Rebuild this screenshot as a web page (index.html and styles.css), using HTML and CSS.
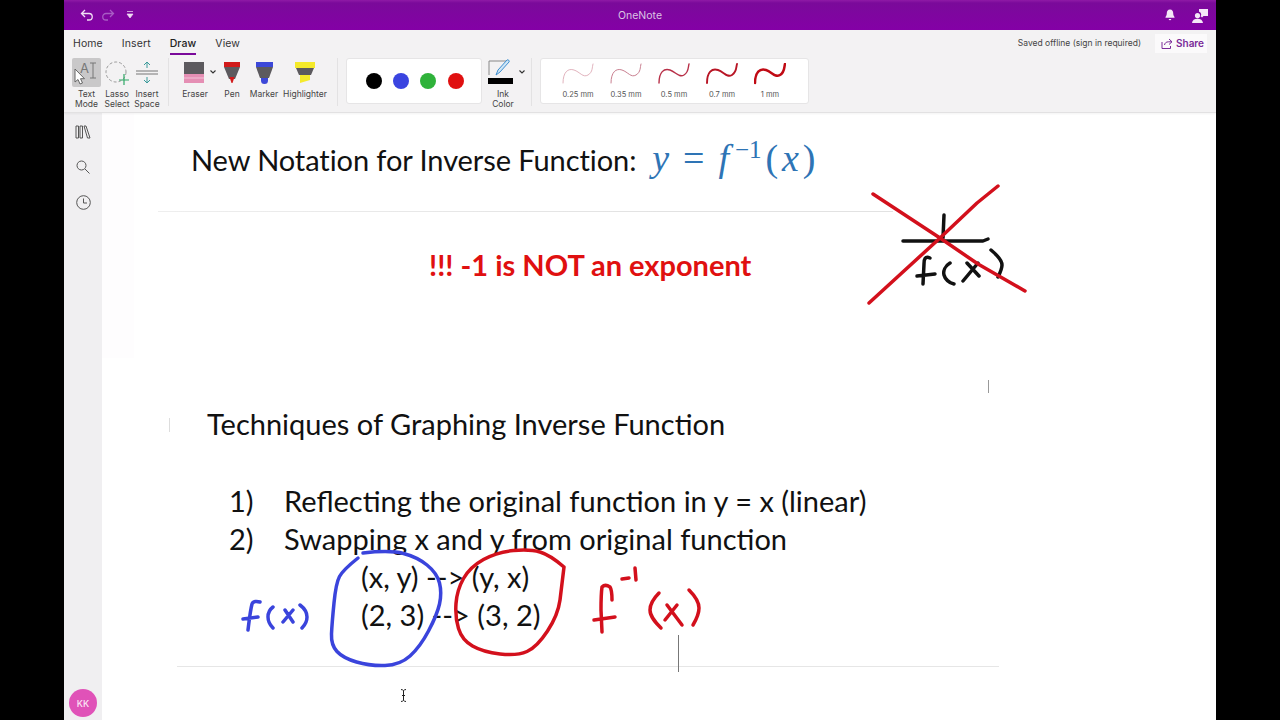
FILE: index.html
```html
<!DOCTYPE html>
<html lang="en">
<head>
  <meta charset="UTF-8" />
  <title>OneNote</title>
  <link rel="stylesheet" href="styles.css">
</head>
<body>
<div class="app">

  <header class="titlebar">
    <div class="qat">
      <svg width="14" height="12" viewBox="0 0 14 12" class="ico"><path d="M5 1 1.500 4.500 5 8M2 4.500h7a3.200 3.200 0 0 1 0 6.500H7"/></svg>
      <svg width="14" height="12" viewBox="0 0 14 12" class="ico dim"><path d="M9 1l3.500 3.500L9 8M12 4.500H5a3.200 3.200 0 0 0 0 6.500h2"/></svg>
      <svg width="8" height="10" viewBox="0 0 8 10" class="qat-more"><path d="M1 1.500h6M1 4h6l-3 4z"/></svg>
    </div>
    <span class="app-name">OneNote</span>
    <div class="title-right">
      <svg width="12" height="12" viewBox="0 0 12 12" class="solid"><path d="M6 0.500c-2.300 0-3.200 1.800-3.200 3.800 0 2-.7 3-1.300 3.700v.8h9v-.8c-.6-.7-1.300-1.700-1.300-3.700 0-2-.9-3.800-3.200-3.800zM4.700 10h2.600a1.300 1.300 0 0 1-2.600 0z"/></svg>
      <svg width="16" height="15" viewBox="0 0 16 15" class="solid"><path d="M7 1h9v7h-4.500L10 9.500c-.5-.5-1-1-1.500-1.200.8-.8 1-2.200.2-3.400C8.300 4.200 7.700 3.900 7 3.800zM5.500 5a2.600 2.600 0 1 1 0 5.200 2.600 2.600 0 0 1 0-5.200zM0 15c.2-2.800 2.500-4.300 5.500-4.300s5.300 1.500 5.500 4.300z"/></svg>
    </div>
  </header>

  <nav class="tabs">
    <span class="tab">Home</span>
    <span class="tab">Insert</span>
    <span class="tab active">Draw</span>
    <span class="tab">View</span>
    <span class="saved">Saved offline (sign in required)</span>
    <span class="share">
      <svg width="12" height="11" viewBox="0 0 12 11" class="share-ico"><path d="M8 1l3 2.800L8 6.500M11 3.800H7.500C5 3.800 3.800 5.200 3.500 7M1 4v6.500h8.500V8"/></svg>
      Share
    </span>
  </nav>

  <section class="ribbon">
    <div class="tool tool-text selected">
      <svg width="29" height="29" viewBox="0 0 29 29" class="tool-ico">
        <text x="8" y="15" class="icon-a">A</text>
        <path d="M18 5h6M21 5v15M18 20h6" fill="none" stroke="#777" stroke-width="1"/>
        <path d="M3 11v13l3-2.500 2 4.500 2.500-1-2-4.300h4z" fill="#fff" stroke="#666" stroke-width="1"/>
      </svg>
      <span class="tool-label">Text<br>Mode</span>
    </div>
    <div class="tool tool-lasso">
      <svg width="26" height="29" viewBox="0 0 26 29" class="tool-ico">
        <circle cx="12" cy="14" r="10" fill="none" stroke="#999" stroke-width="1" stroke-dasharray="3 2"/>
        <path d="M20 16v11M15 22h10" stroke="#2fa866" stroke-width="1.200"/>
      </svg>
      <span class="tool-label">Lasso<br>Select</span>
    </div>
    <div class="tool tool-space">
      <svg width="24" height="29" viewBox="0 0 24 29" class="tool-ico">
        <path d="M1 13h22M1 16h22" stroke="#777" stroke-width="1"/>
        <path d="M12 10V4M9 7l3-3 3 3M12 19v6M9 22l3 3 3-3" fill="none" stroke="#3a9a9a" stroke-width="1"/>
      </svg>
      <span class="tool-label">Insert<br>Space</span>
    </div>

    <i class="sep sep-a"></i>

    <div class="tool tool-eraser">
      <div class="tool-ico eraser-row">
        <svg width="20" height="29" viewBox="0 0 20 29">
          <rect y="4" width="20" height="12" fill="#5c5a5e"/>
          <rect y="16" width="20" height="9" fill="#e58fb4"/>
          <path d="M0 20h20" stroke="#f3c3d8"/>
        </svg>
        <svg width="6" height="4" viewBox="0 0 6 4" class="chev"><path d="M.5.500 3 3 5.500.500"/></svg>
      </div>
      <span class="tool-label">Eraser</span>
    </div>
    <div class="tool tool-pen">
      <svg width="16" height="29" viewBox="0 0 16 29" class="tool-ico">
        <path d="M0 4h16v5H0z" fill="#d11a1a"/>
        <path d="M0 9h16l-5 12H5z" fill="#5c5a5e"/>
        <path d="M5.500 19h5L8.500 25h-1z" fill="#d11a1a"/>
      </svg>
      <span class="tool-label">Pen</span>
    </div>
    <div class="tool tool-marker">
      <svg width="17" height="29" viewBox="0 0 17 29" class="tool-ico">
        <path d="M0 4h17v5H0z" fill="#3c48d8"/>
        <path d="M0 9h17l-4 11H4z" fill="#5c5a5e"/>
        <path d="M5 20h7v2.500a3.500 3.500 0 0 1-7 0z" fill="#3c48d8"/>
      </svg>
      <span class="tool-label">Marker</span>
    </div>
    <div class="tool tool-high">
      <svg width="20" height="29" viewBox="0 0 20 29" class="tool-ico">
        <path d="M0 4h20v6H0z" fill="#f5ea2a"/>
        <path d="M1 10h18l-3 7H4z" fill="#5c5a5e"/>
        <path d="M5 17h10v5l-10 3z" fill="#f5ea2a"/>
      </svg>
      <span class="tool-label">Highlighter</span>
    </div>

    <i class="sep sep-b"></i>

    <div class="panel colours">
      <i class="dot dot-black"></i>
      <i class="dot dot-blue"></i>
      <i class="dot dot-green"></i>
      <i class="dot dot-red"></i>
    </div>

    <div class="tool tool-ink">
      <div class="tool-ico eraser-row">
        <svg width="26" height="29" viewBox="0 0 26 29">
          <path d="M1 17V3h18" fill="none" stroke="#888" stroke-width="1"/>
          <path d="M8 17l2-5 9-10c1-1 3 1 2 2l-9 10z" fill="#cfe6f6" stroke="#3f8fcf" stroke-width="1"/>
          <rect y="20" width="25" height="6" fill="#000"/>
        </svg>
        <svg width="6" height="4" viewBox="0 0 6 4" class="chev"><path d="M.5.500 3 3 5.500.500"/></svg>
      </div>
      <span class="tool-label">Ink<br>Color</span>
    </div>

    <i class="sep sep-c"></i>

    <div class="panel widths">
      <div class="width-item">
        <svg width="32" height="22" viewBox="0 0 32 22" class="w-1"><path d="M1 20C1 9 6 5 12 7s9 8 14 5 4-8 5-11"/></svg>
        <span>0.25 mm</span>
      </div>
      <div class="width-item">
        <svg width="32" height="22" viewBox="0 0 32 22" class="w-2"><path d="M1 20C1 9 6 5 12 7s9 8 14 5 4-8 5-11"/></svg>
        <span>0.35 mm</span>
      </div>
      <div class="width-item">
        <svg width="32" height="22" viewBox="0 0 32 22" class="w-3"><path d="M1 20C1 9 6 5 12 7s9 8 14 5 4-8 5-11"/></svg>
        <span>0.5 mm</span>
      </div>
      <div class="width-item">
        <svg width="32" height="22" viewBox="0 0 32 22" class="w-4"><path d="M1 20C1 9 6 5 12 7s9 8 14 5 4-8 5-11"/></svg>
        <span>0.7 mm</span>
      </div>
      <div class="width-item">
        <svg width="32" height="22" viewBox="0 0 32 22" class="w-5"><path d="M1 20C1 9 6 5 12 7s9 8 14 5 4-8 5-11"/></svg>
        <span>1 mm</span>
      </div>
    </div>
  </section>

  <main class="workspace">
    <aside class="rail">
      <svg width="16" height="14" viewBox="0 0 16 14" class="rail-ico"><path d="M1 1h2.500v12H1zM5 1h2.500v12H5zM9 1h2l4 12h-2.500z"/></svg>
      <svg width="14" height="14" viewBox="0 0 14 14" class="rail-ico"><circle cx="5.500" cy="5.500" r="4.500"/><path d="M9 9l4.500 4.500"/></svg>
      <svg width="15" height="15" viewBox="0 0 15 15" class="rail-ico"><circle cx="7.500" cy="7.500" r="6.800"/><path d="M7.500 3.500v4.500H11"/></svg>
      <span class="avatar">KK</span>
    </aside>

    <div class="canvas">
      <i class="band"></i>

      <p class="note note-title">New Notation for Inverse Function:<span class="math"><i>y</i><span class="eq">=</span><i>f</i><sup>&minus;1</sup><span class="paren">(</span><i>x</i><span class="paren">)</span></span></p>
      <hr class="rule rule-top">

      <p class="note note-warn">!!! -1 is NOT an exponent</p>

      <div class="note note-tech">
        <p>Techniques of Graphing Inverse Function</p>
        <p>&nbsp;</p>
        <p class="item"><span>1)</span><span>Reflecting the original function in y = x (linear)</span></p>
        <p class="item"><span>2)</span><span>Swapping x and y from original function</span></p>
        <p class="pair">(x, y) --&gt; (y, x)</p>
        <p class="pair">(2, 3) --&gt; (3, 2)</p>
      </div>
      <hr class="rule rule-bottom">

      <i class="mark mark-a"></i>
      <i class="mark mark-b"></i>
      <i class="caret"></i>

      <!-- hand drawn ink, numbers are page coordinates -->
      <svg class="ink" viewBox="102 113 1114 607" width="1114" height="607">
        <g class="ink-black">
          <path d="M903 241h80l5-2M944 215l-1 23"/>
          <path d="M930 258c-5-2-6 1-6 6l-1 20M917 276l18-2"/>
          <path d="M950 263c-5 3-7 8-6 12 1 4 5 8 10 9M963 281l15-18M967 263l12 13M991 250c6 5 11 10 11 15 0 4-2 8-4 12"/>
        </g>
        <g class="ink-red">
          <path d="M873 194l67 44 38 26 47 27M869 303l71-65 37-35 21-17"/>
        </g>
        <path class="ink-blue" d="M358 558Q343 570 339.500 576.500 336 583 334 603 332 623 331.500 634 331 645 337 651.500 343 658 356.500 662 370 666 385 665.500 400 665 410 656 420 647 428.500 631 437 615 439.500 604 442 593 439.500 583 437 573 427 565 417 557 403.500 553.500 390 550 363 553"/>
        <path class="ink-red" d="M564 567Q550 555 540 552 530 549 513.500 550.500 497 552 483.500 559.500 470 567 463.500 578.500 457 590 456 603.500 455 617 458.500 628.500 462 640 472.500 646 483 652 500 654 517 656 527 651.500 537 647 547.500 631 558 615 560 600L564 567"/>
        <g class="ink-blue">
          <path d="M260 602c-3-1-7-1-8 2-2 8-3 18-4 26M243 619l15-2M273 607c-4 3-5 7-5 10 0 4 2 8 5 11M285 610l8 12M293 610l-10 12M300 605c4 3 7 8 7 12 0 4-2 8-5 11"/>
        </g>
        <g class="ink-red">
          <path d="M612 600c0-5 0-10-2-13-3-2-6-2-8 0-1 7-1 15-1 23l1 22M594 620l21-3M622 579l7-1M635 568l1 12M659 593c-5 5-9 12-9 17 0 7 6 13 11 18M665 620l12-15M667 605l15 20M689 590c5 5 10 12 10 18 0 6-3 12-6 17"/>
        </g>
      </svg>

      <svg class="ibeam" width="7" height="13" viewBox="0 0 7 13"><path d="M1 .500c1 0 2 .5 2.500 1 .5-.5 1.500-1 2.500-1M3.500 1.500v10M1 12.500c1 0 2-.5 2.500-1 .5.5 1.500 1 2.500 1M2 6.500h3"/></svg>
    </div>
  </main>
</div>
</body>
</html>
```

FILE: styles.css
```css
* {
  margin: 0;
  padding: 0;
  box-sizing: border-box;
}

html, body {
  height: 100%;
  overflow: hidden;
}

body {
  background: #000;
  font-family: "Inter", "Liberation Sans", sans-serif;
}

.app {
  width: 1152px;
  height: 720px;
  margin-left: 64px;
  display: flex;
  flex-direction: column;
  background: #f3f2f3;
}

/* title bar */

.titlebar {
  height: 30px;
  flex: none;
  display: flex;
  align-items: center;
  position: relative;
  padding: 0 8px 0 16px;
  background: linear-gradient(#8f1aa6 0, #7a0a9a 3px, #8400a6 100%);
  color: #e9d5ee;
}

.qat {
  display: flex;
  align-items: center;
  gap: 7px;
}

.ico {
  fill: none;
  stroke: #f1def5;
  stroke-width: 1.300;
}

.ico.dim {
  stroke: #a85cc4;
}

.qat-more {
  margin-left: 4px;
  fill: #efdcf4;
  stroke: #efdcf4;
  stroke-width: .7;
}

.app-name {
  position: absolute;
  left: 0;
  right: 0;
  text-align: center;
  font-size: 10.500px;
  color: #dcc4e4;
}

.title-right {
  margin-left: auto;
  display: flex;
  align-items: center;
  gap: 16px;
}

.solid {
  fill: #f4e6f7;
}

/* tabs */

.tabs {
  height: 25px;
  flex: none;
  display: flex;
  align-items: center;
  padding: 1px 9px 0 9px;
  font-size: 10.500px;
  color: #333;
}

.tab {
  margin-right: 19px;
  padding: 5px 0 3px;
  letter-spacing: .1px;
  border-bottom: 2px solid transparent;
}

.tab.active {
  font-weight: 500;
  color: #222;
  border-bottom-color: #7a0a9a;
}

.saved {
  margin-left: auto;
  font-size: 8.500px;
  color: #444;
}

.share {
  margin-left: 14px;
  height: 19px;
  width: 52px;
  display: flex;
  align-items: center;
  gap: 3px;
  padding-left: 6px;
  background: #fbfafb;
  color: #7a2a98;
  font-size: 10px;
  font-weight: 600;
}

.share-ico {
  fill: none;
  stroke: #7a2a98;
  flex: none;
}

/* ribbon */

.ribbon {
  height: 58px;
  flex: none;
  display: flex;
  align-items: flex-start;
  padding: 3px 0 0 8px;
  border-bottom: 1px solid #e2e1e2;
  box-shadow: 0 1px 2px rgba(0,0,0,.05);
  position: relative;
  z-index: 1;
}

.tool {
  display: flex;
  flex-direction: column;
  align-items: center;
  flex: none;
}

.tool-ico {
  height: 29px;
  flex: none;
}

.tool-label {
  margin-top: 2px;
  font-size: 8.500px;
  line-height: 10px;
  color: #444;
  text-align: center;
  white-space: nowrap;
}

.tool-text { width: 29px; }
.tool-text .tool-ico { background: #c9c8c9; border-radius: 2px; }
.tool-lasso { width: 26px; margin-left: 3px; }
.tool-space { width: 26px; margin-left: 4px; }
.tool-eraser { width: 30px; margin-left: 11px; }
.tool-pen { width: 30px; margin-left: 7px; }
.tool-marker { width: 34px; margin-left: 0; }
.tool-high { width: 46px; margin-left: 1px; }
.tool-ink { width: 36px; margin-left: 3px; }

.icon-a {
  font-size: 13px;
  fill: #777;
  font-family: "Inter", sans-serif;
}

.eraser-row {
  display: flex;
  align-items: center;
  gap: 6px;
  margin-left: 12px;
  align-self: flex-start;
}

.tool-eraser .eraser-row { margin-left: 4px; }
.tool-ink .eraser-row { margin-left: 3px; gap: 5px; }

.chev {
  fill: none;
  stroke: #333;
  stroke-width: 1.100;
  margin-top: -1px;
}

.sep {
  flex: none;
  width: 1px;
  height: 48px;
  background: #e3e2e3;
}

.sep-a { margin-left: 8px; }
.sep-b { margin-left: 9px; }
.sep-c { margin-left: 10px; }

.panel {
  flex: none;
  height: 46px;
  background: #fff;
  border: 1px solid #e6e5e6;
  border-radius: 3px;
  display: flex;
  align-items: center;
}

.colours {
  width: 136px;
  margin-left: 8px;
  padding: 0 0 0 19px;
  gap: 11.200px;
}

.dot {
  width: 16px;
  height: 16px;
  border-radius: 50%;
  flex: none;
}

.dot-black { background: #000; }
.dot-blue { background: #3a44e0; }
.dot-green { background: #2fb23a; }
.dot-red { background: #e01010; }

.widths {
  width: 269px;
  margin-left: 8px;
  padding: 0 14px 0 13px;
  justify-content: space-between;
}

.width-item {
  width: 48px;
  display: flex;
  flex-direction: column;
  align-items: center;
  gap: 5px;
  font-size: 7.500px;
  color: #555;
  white-space: nowrap;
}

.width-item svg {
  fill: none;
  stroke-linecap: round;
}

.w-1 { stroke: #d9a0ac; stroke-width: .8; }
.w-2 { stroke: #c97f90; stroke-width: 1; }
.w-3 { stroke: #b83048; stroke-width: 1.400; }
.w-4 { stroke: #b81525; stroke-width: 1.900; }
.w-5 { stroke: #c00a14; stroke-width: 2.500; }

/* page area */

.workspace {
  flex: 1;
  min-height: 0;
  display: flex;
}

.rail {
  width: 38px;
  flex: none;
  display: flex;
  flex-direction: column;
  align-items: center;
  padding-top: 12px;
  gap: 21px;
  background: #f0eff1;
  position: relative;
}

.rail-ico {
  fill: none;
  stroke: #555;
  stroke-width: 1;
  flex: none;
}

.avatar {
  width: 28px;
  height: 28px;
  margin-top: auto;
  margin-bottom: 3px;
  border-radius: 50%;
  background: #e052b8;
  color: #fbe6f5;
  font-size: 9px;
  font-weight: 500;
  display: flex;
  align-items: center;
  justify-content: center;
}

.canvas {
  flex: 1;
  position: relative;
  background: #fff;
  overflow: hidden;
  font-family: "Lato", "Open Sans", sans-serif;
  color: #111;
}

.band {
  position: absolute;
  left: 0;
  top: 0;
  width: 32px;
  height: 245px;
  background: #fefdfe;
}

.note {
  position: absolute;
  font-size: 29px;
  white-space: nowrap;
}

.note-title {
  left: 89px;
  top: 23px;
  line-height: 44px;
  letter-spacing: -.08px;
}

.math {
  margin-left: 16px;
  font-family: "Liberation Serif", serif;
  font-size: 38px;
  color: #2e74b5;
}

.eq {
  margin: 0 14px;
}

.math sup {
  font-size: 25px;
  line-height: 0;
  margin-left: 6px;
  vertical-align: 13px;
}

.paren {
  margin: 0 4px;
}

.note-warn {
  left: 327px;
  top: 130px;
  line-height: 44px;
  font-weight: 700;
  color: #e01010;
}

.note-tech {
  left: 105px;
  top: 292px;
  line-height: 38.300px;
}

.item {
  display: flex;
  padding-left: 22px;
}

.item span:first-child {
  width: 55px;
}

.pair {
  padding-left: 154px;
}

.rule {
  position: absolute;
  border: none;
  height: 1px;
}

.rule-top {
  left: 56px;
  top: 98px;
  width: 735px;
  background: linear-gradient(90deg, #eee, #e2e2e2 70%, #e2e2e2);
}

.rule-bottom {
  left: 75px;
  top: 553px;
  width: 822px;
  background: #e6e6e6;
}

.mark {
  position: absolute;
  width: 1px;
}

.mark-a {
  left: 886px;
  top: 267px;
  height: 13px;
  background: #999;
}

.mark-b {
  left: 67px;
  top: 305px;
  height: 14px;
  background: #ddd;
}

.caret {
  position: absolute;
  left: 576px;
  top: 522px;
  width: 1px;
  height: 37px;
  background: #777;
}

.ink {
  position: absolute;
  left: 0;
  top: 0;
  fill: none;
  stroke-linecap: round;
  stroke-linejoin: round;
}

.ink-black { stroke: #111; stroke-width: 3.500; }
.ink-red { stroke: #d3101c; stroke-width: 3.500; }
.ink-blue { stroke: #3a44dc; stroke-width: 3.500; }

.ibeam {
  position: absolute;
  left: 298px;
  top: 576px;
  fill: none;
  stroke: #222;
  stroke-width: 1;
}
```
